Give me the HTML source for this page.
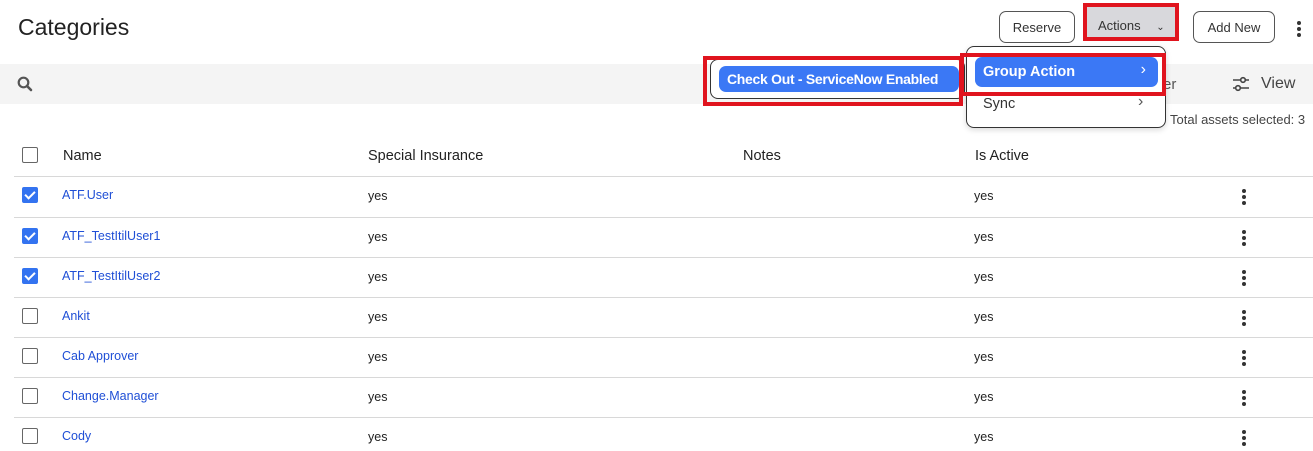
<!DOCTYPE html>
<html><head><style>
*{box-sizing:border-box;margin:0;padding:0}
body{width:1313px;height:451px;overflow:hidden;background:#fff;font-family:"Liberation Sans",sans-serif;position:relative;color:#222}
.abs{position:absolute;white-space:nowrap}
.btn{position:absolute;top:11px;height:32px;border:1px solid #555;border-radius:7px;background:#fff;font-size:13px;color:#333;display:flex;align-items:center;justify-content:center}
.red{position:absolute;border:4px solid #e0141e}
.line{position:absolute;left:14px;right:0;height:1px;background:#d8d8d8}
.cb{position:absolute;left:22px;width:16px;height:16px;border:1.5px solid #666;border-radius:2px;background:#fff}
.cb.on{background:#3373f0;border-color:#3373f0}
.cb.on:after{content:"";position:absolute;left:4px;top:1px;width:4px;height:8px;border:solid #fff;border-width:0 2px 2px 0;transform:rotate(45deg)}
.nm{position:absolute;left:62px;font-size:12.5px;color:#1f4fd6;white-space:nowrap}
.t{position:absolute;font-size:12.5px;color:#222;white-space:nowrap}
.dots{position:absolute;left:1242px;width:4px}
.dots i{display:block;width:4px;height:4px;border-radius:2px;background:#333;margin-bottom:2px}
</style></head><body>
<div class="abs" style="left:18px;top:14px;font-size:23px;color:#222">Categories</div>
<div class="btn" style="left:999px;width:76px">Reserve</div>
<div class="abs" style="left:1087px;top:6px;width:88px;height:33px;background:#d8d8dc;font-size:13px;color:#333;padding:12px 0 0 11px">Actions <span style="font-size:10px;margin-left:12px">&#8964;</span></div>
<div class="red" style="left:1083px;top:3px;width:96px;height:38px"></div>
<div class="btn" style="left:1193px;width:82px">Add New</div>
<div class="dots" style="left:1297px;top:21px"><i></i><i></i><i></i></div>

<div class="abs" style="left:0;top:64px;width:1313px;height:40px;background:#f4f4f4"></div>
<svg class="abs" style="left:17px;top:76px" width="16" height="16" viewBox="0 0 16 16"><circle cx="6.5" cy="6.5" r="4.8" fill="none" stroke="#555" stroke-width="2.2"/><path d="M10 10l4 4" stroke="#555" stroke-width="2.6" stroke-linecap="round"/></svg>
<div class="t" style="left:1163px;top:76px;font-size:15px;color:#555">er</div>
<svg class="abs" style="left:1232px;top:76px" width="18" height="16" viewBox="0 0 18 16"><path d="M1 4h16M1 12h16" stroke="#444" stroke-width="1.6"/><circle cx="11" cy="4" r="2.3" fill="#f4f4f4" stroke="#444" stroke-width="1.6"/><circle cx="6" cy="12" r="2.3" fill="#f4f4f4" stroke="#444" stroke-width="1.6"/></svg>
<div class="t" style="left:1261px;top:75px;font-size:16px;color:#444">View</div>
<div class="t" style="left:1170px;top:112px;font-size:13px;color:#444">Total assets selected: 3</div>

<div class="abs" style="left:710px;top:59px;width:255px;height:40px;border:1px solid #333;border-radius:8px;background:#fff"></div>
<div class="abs" style="left:719px;top:66px;width:240px;height:26px;background:#3b78f5;border-radius:7px;color:#fff;font-size:14px;font-weight:bold;padding:5px 0 0 8px;letter-spacing:-0.3px">Check Out - ServiceNow Enabled</div>
<div class="red" style="left:703px;top:56px;width:260px;height:50px"></div>

<div class="abs" style="left:966px;top:46px;width:200px;height:82px;border:1px solid #333;border-radius:8px;background:#fff;box-shadow:0 2px 6px rgba(0,0,0,.15)"></div>
<div class="abs" style="left:975px;top:57px;width:183px;height:30px;background:#3b78f5;border-radius:7px;color:#fff;font-size:14.5px;font-weight:bold;padding:7px 0 0 8px">Group Action<span style="position:absolute;right:12px;top:4px;font-weight:normal;font-size:16px">&#8250;</span></div>
<div class="red" style="left:960px;top:53px;width:206px;height:43px"></div>
<div class="t" style="left:983px;top:96px;font-size:14.5px;color:#333">Sync</div>
<div class="t" style="left:1138px;top:93px;font-size:16px;color:#555">&#8250;</div>

<div class="cb" style="top:147px"></div>
<div class="t" style="left:63px;top:148px;font-size:14.5px">Name</div>
<div class="t" style="left:368px;top:148px;font-size:14.5px">Special Insurance</div>
<div class="t" style="left:743px;top:148px;font-size:14.5px">Notes</div>
<div class="t" style="left:975px;top:148px;font-size:14.5px">Is Active</div>
<div class="line" style="top:176px"></div>

<div class="cb on" style="top:187px"></div><div class="nm" style="top:188px">ATF.User</div><div class="t" style="left:368px;top:189px">yes</div><div class="t" style="left:974px;top:189px">yes</div><div class="dots" style="top:189px"><i></i><i></i><i></i></div><div class="line" style="top:217px"></div>
<div class="cb on" style="top:228px"></div><div class="nm" style="top:229px">ATF_TestItilUser1</div><div class="t" style="left:368px;top:230px">yes</div><div class="t" style="left:974px;top:230px">yes</div><div class="dots" style="top:230px"><i></i><i></i><i></i></div><div class="line" style="top:257px"></div>
<div class="cb on" style="top:268px"></div><div class="nm" style="top:269px">ATF_TestItilUser2</div><div class="t" style="left:368px;top:270px">yes</div><div class="t" style="left:974px;top:270px">yes</div><div class="dots" style="top:270px"><i></i><i></i><i></i></div><div class="line" style="top:297px"></div>
<div class="cb" style="top:308px"></div><div class="nm" style="top:309px">Ankit</div><div class="t" style="left:368px;top:310px">yes</div><div class="t" style="left:974px;top:310px">yes</div><div class="dots" style="top:310px"><i></i><i></i><i></i></div><div class="line" style="top:337px"></div>
<div class="cb" style="top:348px"></div><div class="nm" style="top:349px">Cab Approver</div><div class="t" style="left:368px;top:350px">yes</div><div class="t" style="left:974px;top:350px">yes</div><div class="dots" style="top:350px"><i></i><i></i><i></i></div><div class="line" style="top:377px"></div>
<div class="cb" style="top:388px"></div><div class="nm" style="top:389px">Change.Manager</div><div class="t" style="left:368px;top:390px">yes</div><div class="t" style="left:974px;top:390px">yes</div><div class="dots" style="top:390px"><i></i><i></i><i></i></div><div class="line" style="top:417px"></div>
<div class="cb" style="top:428px"></div><div class="nm" style="top:429px">Cody</div><div class="t" style="left:368px;top:430px">yes</div><div class="t" style="left:974px;top:430px">yes</div><div class="dots" style="top:430px"><i></i><i></i><i></i></div>
</body></html>
